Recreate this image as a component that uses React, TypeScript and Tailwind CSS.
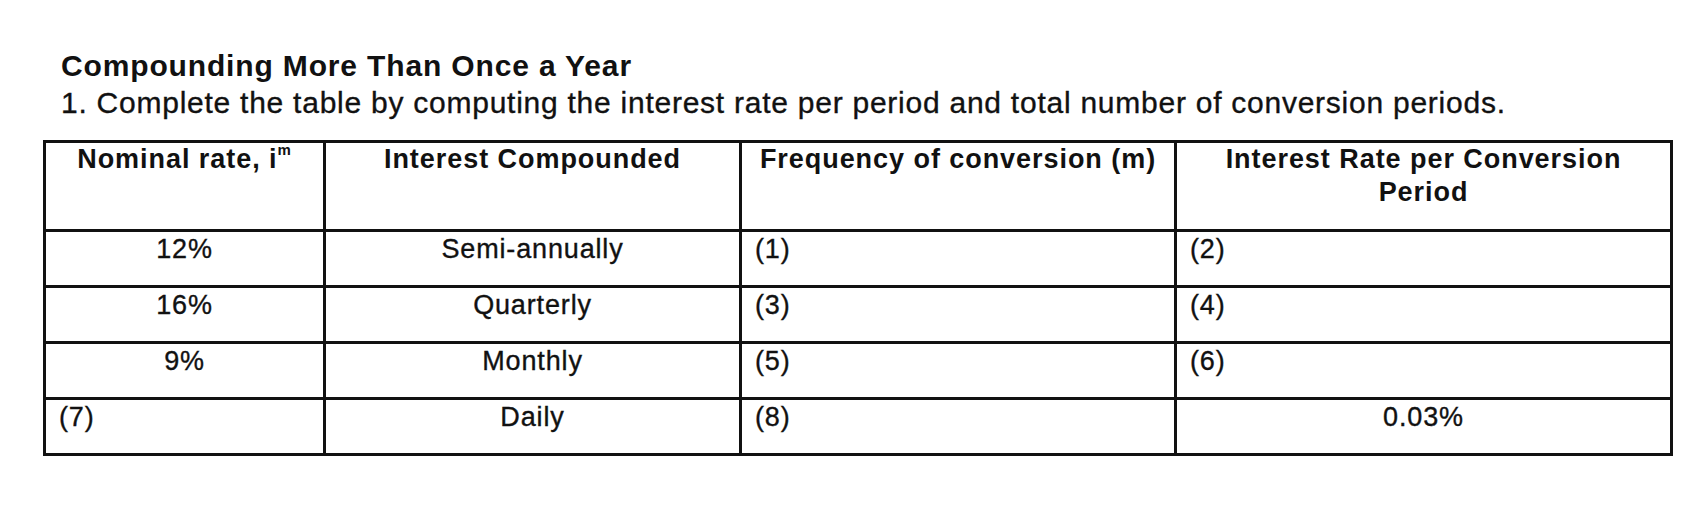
const rows = [
  { rate: "12%", comp: "Semi-annually", freq: "(1)", per: "(2)" },
  { rate: "16%", comp: "Quarterly", freq: "(3)", per: "(4)" },
  { rate: "9%", comp: "Monthly", freq: "(5)", per: "(6)" },
  { rate: "(7)", comp: "Daily", freq: "(8)", per: "0.03%" },
];

export default function App() {
  return (
    <div
      className="min-h-[512px] w-[1694px] bg-white pt-[47px] pl-[43px] text-[#111]"
      style={{ fontFamily: '"Liberation Sans", Arial, sans-serif' }}
    >
      <div className="pl-[18px]">
        <h1 className="text-[30px] font-bold leading-[37px] tracking-[0.85px]">
          Compounding More Than Once a Year
        </h1>
        <p className="text-[30px] leading-[37px] tracking-[0.75px] [-webkit-text-stroke:0.35px_#111]">
          1. Complete the table by computing the interest rate per period and total number of conversion periods.
        </p>
      </div>

      <div className="mt-[19px] grid w-[1630px] grid-cols-[280px_416px_435px_496px] border-l-[3px] border-t-[3px] border-[#111]">
        {/* header */}
        <div className="h-[89px] border-r-[3px] border-b-[3px] border-[#111] text-center text-[27px] font-bold leading-[33px] tracking-[0.95px]">
          Nominal rate, i
          <sup className="relative -top-[1px] align-top text-[15px] leading-none">m</sup>
        </div>
        <div className="h-[89px] border-r-[3px] border-b-[3px] border-[#111] text-center text-[27px] font-bold leading-[33px] tracking-[0.95px]">
          Interest Compounded
        </div>
        <div className="h-[89px] border-r-[3px] border-b-[3px] border-[#111] text-center text-[27px] font-bold leading-[33px] tracking-[0.95px]">
          Frequency of conversion (m)
        </div>
        <div className="h-[89px] border-r-[3px] border-b-[3px] border-[#111] text-center text-[27px] font-bold leading-[33px] tracking-[0.95px]">
          Interest Rate per Conversion
          <br />
          Period
        </div>

        {rows.map((r, i) => {
          const last = i === rows.length - 1;
          return (
            <div key={i} className="contents">
              <div
                className={
                  last
                    ? "h-[56px] border-r-[3px] border-b-[3px] border-[#111] pl-[13px] pt-[1px] text-left text-[27px] leading-[33px] tracking-[0.85px] [-webkit-text-stroke:0.35px_#111]"
                    : "h-[56px] border-r-[3px] border-b-[3px] border-[#111] pt-[1px] text-center text-[27px] leading-[33px] tracking-[0.85px] [-webkit-text-stroke:0.35px_#111]"
                }
              >
                {r.rate}
              </div>
              <div className="h-[56px] border-r-[3px] border-b-[3px] border-[#111] pt-[1px] text-center text-[27px] leading-[33px] tracking-[0.85px] [-webkit-text-stroke:0.35px_#111]">
                {r.comp}
              </div>
              <div className="h-[56px] border-r-[3px] border-b-[3px] border-[#111] pl-[13px] pt-[1px] text-[27px] leading-[33px] tracking-[0.85px] [-webkit-text-stroke:0.35px_#111]">
                {r.freq}
              </div>
              <div
                className={
                  last
                    ? "h-[56px] border-r-[3px] border-b-[3px] border-[#111] pt-[1px] text-center text-[27px] leading-[33px] tracking-[0.85px] [-webkit-text-stroke:0.35px_#111]"
                    : "h-[56px] border-r-[3px] border-b-[3px] border-[#111] pl-[13px] pt-[1px] text-[27px] leading-[33px] tracking-[0.85px] [-webkit-text-stroke:0.35px_#111]"
                }
              >
                {r.per}
              </div>
            </div>
          );
        })}
      </div>
    </div>
  );
}
